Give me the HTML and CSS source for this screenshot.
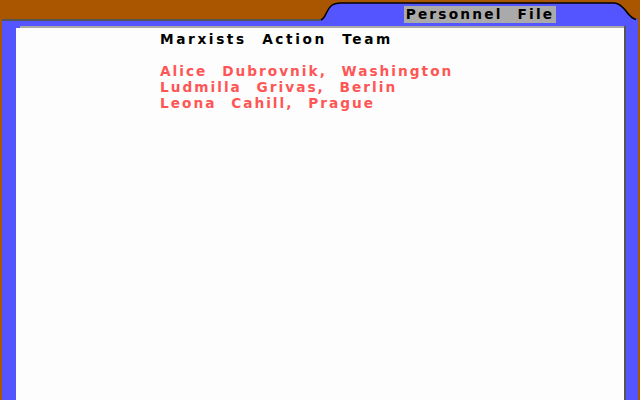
FILE: index.html
```html
<!DOCTYPE html>
<html>
<head>
<meta charset="utf-8">
<link rel="stylesheet" href="styles.css">
</head>
<body>
<div class="screen">
  <div class="header">
    <svg class="header-art" width="640" height="28" viewBox="0 0 640 28" shape-rendering="crispEdges">
      <rect x="0" y="0" width="640" height="28" fill="#aa5500"/>
      <rect x="2" y="19" width="636" height="9" fill="#5555ff"/>
      <rect x="2" y="19" width="322" height="2" fill="#555555"/>
      <path d="M320 21 C326 19 326 10 331 6 C334 3.5 337 3 341 3 L614 3 C619 3 622 6 626 11 C629 15 631 18 638 19 L638 28 L320 28 Z" fill="#5555ff" shape-rendering="auto"/>
      <path d="M321 20 C326 18 326 10 331 6 C334 3.5 337 3 341 3 L614 3 C619 3 622 6 626 11 C629 15 631 18 636 19.5" fill="none" stroke="#000" stroke-width="1.6" shape-rendering="auto"/>
      <rect x="20" y="26" width="604" height="2" fill="#aaaaaa"/>
      <rect x="624" y="26" width="2" height="2" fill="#555555"/>
    </svg>
    <div class="title">Personnel File</div>
  </div>
  <div class="main">
    <div class="rail-left"></div>
    <div class="page">
      <div class="heading">Marxists Action Team</div>
      <p class="members">Alice Dubrovnik, Washington<br>Ludmilla Grivas, Berlin<br>Leona Cahill, Prague</p>
    </div>
    <div class="shade-right"></div>
    <div class="rail-right"></div>
  </div>
</div>
</body>
</html>
```
FILE: styles.css
```css
html, body {
  margin: 0;
  padding: 0;
  background: #aa5500;
}
.screen {
  width: 640px;
  height: 400px;
  display: flex;
  flex-direction: column;
  overflow: hidden;
  font-family: "DejaVu Sans", sans-serif;
  font-weight: bold;
  font-size: 13.7px;
  line-height: 16px;
  letter-spacing: 2px;
  word-spacing: 8px;
}
.header {
  position: relative;
  height: 28px;
  flex: none;
  display: flex;
  align-items: flex-start;
  padding-left: 404px;
  box-sizing: border-box;
}
.header-art {
  position: absolute;
  left: 0;
  top: 0;
  display: block;
}
.title {
  position: relative;
  margin-top: 6px;
  width: 152px;
  height: 17px;
  background: #aaaaaa;
  color: #000;
  line-height: 17px;
  text-align: center;
  white-space: nowrap;
  letter-spacing: 2.2px;
  word-spacing: 8px;
}
.main {
  flex: 1;
  display: flex;
}
.rail-left {
  width: 14px;
  margin-left: 2px;
  background: #5555ff;
}
.page {
  flex: 1;
  background: #fdfdfd;
  padding: 3px 0 0 144px;
}
.shade-right {
  width: 2px;
  background: #555555;
}
.rail-right {
  width: 12px;
  background: #5555ff;
  margin-right: 2px;
}
.heading {
  color: #000;
  height: 16px;
  letter-spacing: 2.6px;
  white-space: nowrap;
}
.members {
  margin: 16px 0 0 0;
  padding: 0;
  color: #ff5555;
  white-space: nowrap;
}
```
